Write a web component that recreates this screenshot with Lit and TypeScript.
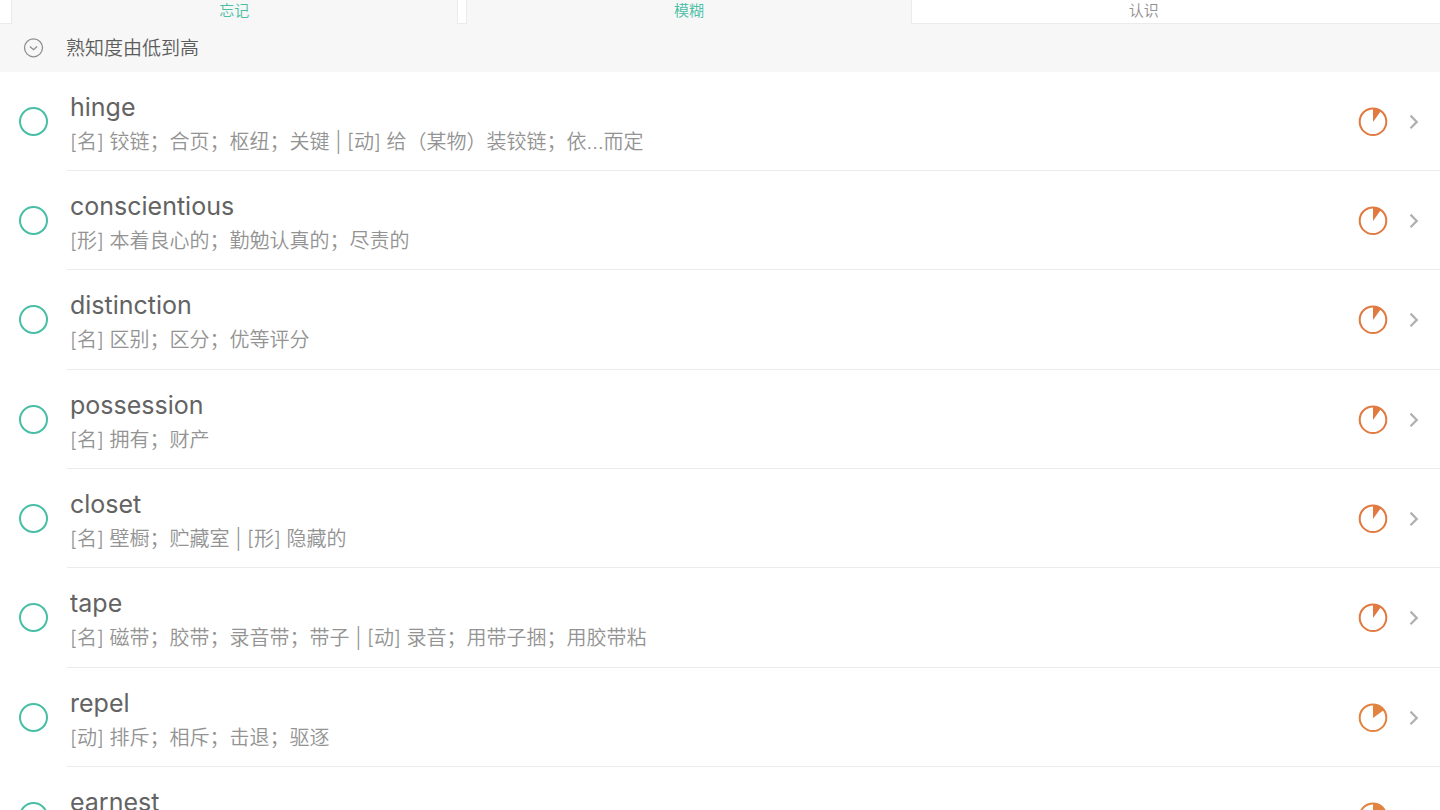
import { LitElement, css, html, svg, nothing } from "lit";
import { customElement, property, state } from "lit/decorators.js";
import { classMap } from "lit/directives/class-map.js";

interface Word {
  term: string;
  meaning?: string;
  familiarity: number;
}

const WORDS: Word[] = [
  { term: "hinge", meaning: "[名] 铰链；合页；枢纽；关键 | [动] 给（某物）装铰链；依...而定", familiarity: 0.1 },
  { term: "conscientious", meaning: "[形] 本着良心的；勤勉认真的；尽责的", familiarity: 0.1 },
  { term: "distinction", meaning: "[名] 区别；区分；优等评分", familiarity: 0.1 },
  { term: "possession", meaning: "[名] 拥有；财产", familiarity: 0.1 },
  { term: "closet", meaning: "[名] 壁橱；贮藏室 | [形] 隐藏的", familiarity: 0.1 },
  { term: "tape", meaning: "[名] 磁带；胶带；录音带；带子 | [动] 录音；用带子捆；用胶带粘", familiarity: 0.1 },
  { term: "repel", meaning: "[动] 排斥；相斥；击退；驱逐", familiarity: 0.15 },
  { term: "earnest", familiarity: 0.15 },
];

/** Ring with a filled sector that grows clockwise from twelve o'clock. */
@customElement("familiarity-pie")
export class FamiliarityPie extends LitElement {
  @property({ type: Number }) value = 0;

  static styles = css`
    :host {
      display: block;
      width: 30px;
      height: 30px;
      color: #e07a41;
    }
    :host([stronger]) {
      color: #e28340;
    }
    .pie {
      display: block;
    }
  `;

  render() {
    const angle = this.value * Math.PI * 2;
    const x = 15 + 13.5 * Math.sin(angle);
    const y = 15 - 13.5 * Math.cos(angle);
    return html`<svg class="pie" width="30" height="30" viewBox="0 0 30 30" aria-hidden="true">
      ${svg`<circle cx="15" cy="14.7" r="13.3" fill="none" stroke="currentColor" stroke-width="2" />
      <path d=${`M15 15V1.5A13.5 13.5 0 0 1 ${x} ${y}Z`} fill="currentColor" />`}
    </svg>`;
  }
}

@customElement("word-row")
export class WordRow extends LitElement {
  @property({ attribute: false }) word!: Word;

  static styles = css`
    :host {
      display: flex;
      align-items: stretch;
    }
    .pick {
      flex: none;
      width: 67px;
      padding: 35px 0 0 19px;
      box-sizing: border-box;
    }
    .check {
      appearance: none;
      display: block;
      width: 29px;
      height: 29px;
      margin: 0;
      border: 2px solid #47bea5;
      border-radius: 50%;
      cursor: pointer;
    }
    .check:checked {
      background: #47bea5;
      box-shadow: inset 0 0 0 4px #fff;
    }
    .body {
      flex: 1;
      min-width: 0;
      display: flex;
      align-items: flex-start;
      border-bottom: 1px solid #ebebeb;
    }
    .text {
      flex: 1;
      min-width: 0;
      padding: 18px 0 0 3px;
      cursor: pointer;
    }
    .term,
    .meaning {
      display: block;
      white-space: nowrap;
      overflow: hidden;
      text-overflow: ellipsis;
    }
    .term {
      font: 400 25px/34px Inter, "Liberation Sans", sans-serif;
      color: #636363;
    }
    .meaning {
      font: 350 20px/36px Inter, "Noto Sans CJK SC", sans-serif;
      color: #939393;
    }
    .level {
      flex: none;
      padding-top: 35px;
    }
    .more {
      flex: none;
      padding: 40px 20px 0;
      color: #b0b0b0;
    }
    .chevron {
      display: block;
    }
  `;

  render() {
    const { term, meaning, familiarity } = this.word;
    return html`
      <div class="pick"><input class="check" type="checkbox" id="check" /></div>
      <div class="body">
        <label class="text" for="check">
          <span class="term" lang="en">${term}</span>
          ${meaning ? html`<span class="meaning">${meaning}</span>` : nothing}
        </label>
        <familiarity-pie class="level" .value=${familiarity} ?stronger=${familiarity > 0.12}></familiarity-pie>
        <a class="more" href="#${term}" aria-label=${term}>
          <svg class="chevron" width="12" height="20" viewBox="0 0 12 20" fill="none" stroke="currentColor" stroke-width="2.2" aria-hidden="true">
            <path d="M2.5 3.6 8.8 9.9l-6.3 6.3" />
          </svg>
        </a>
      </div>
    `;
  }
}

@customElement("app-root")
export class AppRoot extends LitElement {
  @state() private active = new Set(["忘记", "模糊"]);

  static styles = css`
    :host {
      display: block;
      height: 100vh;
      overflow: hidden;
      background: #fff;
      font-family: "Noto Sans CJK SC", sans-serif;
    }
    .filters {
      display: grid;
      grid-template-columns: repeat(3, 1fr);
      column-gap: 8px;
      padding: 0 73px 0 11px;
      border-bottom: 1px solid #ebebeb;
    }
    .filter {
      height: 24px;
      margin: 0 0 -1px;
      padding: 0 0 4px;
      border: 0 solid transparent;
      border-width: 0 1px;
      background: none;
      font: 350 15px/20px "Noto Sans CJK SC", sans-serif;
      color: #909090;
      cursor: pointer;
    }
    .filter.on {
      background: #f7f7f7;
      border-color: #ebebeb;
      color: #47bea5;
    }
    .sort {
      display: flex;
      align-items: center;
      width: 100%;
      height: 48px;
      padding: 0 23px 2px;
      gap: 22px;
      border: 0;
      background: #f7f7f7;
      font: 350 19px/28px "Noto Sans CJK SC", sans-serif;
      color: #5c5c5c;
      text-align: left;
      cursor: pointer;
    }
    .list {
      display: grid;
      grid-auto-rows: 99px 99px 100px;
      margin: 0;
      padding: 0;
      list-style: none;
    }
    .item {
      display: grid;
    }
  `;

  private toggle(name: string) {
    const next = new Set(this.active);
    if (!next.delete(name)) next.add(name);
    this.active = next;
  }

  render() {
    return html`
      <div class="filters" role="group">
        ${["忘记", "模糊", "认识"].map(
          (name) => html`<button
            class=${classMap({ filter: true, on: this.active.has(name) })}
            aria-pressed=${this.active.has(name) ? "true" : "false"}
            @click=${() => this.toggle(name)}
          >${name}</button>`
        )}
      </div>
      <button class="sort">
        <svg width="21" height="21" viewBox="0 0 21 21" fill="none" stroke="#8e8e8e" aria-hidden="true">
          <circle cx="10.5" cy="10.8" r="9" stroke-width="1.3" />
          <path d="m6.9 9.4 3.6 3.3 3.6-3.3" stroke-width="1.3" />
        </svg>
        <span>熟知度由低到高</span>
      </button>
      <ul class="list">
        ${WORDS.map((word) => html`<li class="item"><word-row .word=${word}></word-row></li>`)}
      </ul>
    `;
  }
}
